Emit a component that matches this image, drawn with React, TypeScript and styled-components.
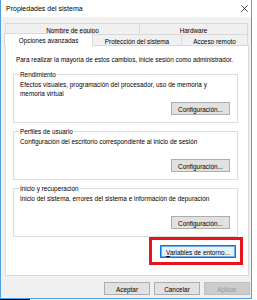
import React from "react";
import styled, { createGlobalStyle } from "styled-components";

const Global = createGlobalStyle`
  html, body { margin: 0; padding: 0; background: #ffffff; }
  body {
    width: 257px;
    height: 300px;
    overflow: hidden;
    font-family: "Liberation Sans", Arial, sans-serif;
    color: #000000;
  }
  * { box-sizing: border-box; }
`;

const Screen = styled.div`
  width: 257px;
  height: 300px;
  display: flex;
  flex-direction: column;
  background: #ffffff;
`;

const Window = styled.div`
  width: 252px;
  height: 299px;
  display: flex;
  flex-direction: column;
  border: 1px solid #4f9fe3;
  border-top: none;
  background: #f0f0f0;
`;

const TaskbarSliver = styled.div`
  width: 30px;
  height: 1px;
  background: #000000;
`;

const TitleBar = styled.div`
  height: 17px;
  flex: none;
  background: #ffffff;
  display: flex;
  align-items: center;
  justify-content: space-between;
  padding: 0 3px 0 5px;
`;

const Title = styled.span`
  font-size: 7px;
  line-height: 9px;
  white-space: nowrap;
`;

const CloseIcon = styled.svg`
  display: block;
  width: 7px;
  height: 7px;
`;

const Body = styled.div`
  flex: 1;
  display: flex;
  flex-direction: column;
  padding: 6px 2px 0 4px;
  font-size: 6.4px;
  line-height: 9px;
`;

const TabRow = styled.div<{ $first?: boolean }>`
  display: flex;
  align-items: flex-start;
  height: 11px;
  margin-top: ${(p) => (p.$first ? "0" : "0")};
`;

const Tab = styled.div<{ $w: number; $active?: boolean; $lead?: boolean }>`
  position: relative;
  flex: none;
  width: ${(p) => p.$w}px;
  height: ${(p) => (p.$active ? 13 : 11)}px;
  margin-left: ${(p) => (p.$lead && !p.$active ? 0 : -1)}px;
  margin-top: ${(p) => (p.$active ? -1 : 0)}px;
  z-index: ${(p) => (p.$active ? 2 : 1)};
  display: flex;
  align-items: center;
  justify-content: center;
  padding-top: ${(p) => (p.$active ? 1 : 2)}px;
  border: 1px solid #d9d9d9;
  border-bottom: none;
  background: ${(p) => (p.$active ? "#ffffff" : "#f0f0f0")};
  white-space: nowrap;
`;

const Panel = styled.div`
  flex: none;
  height: 231px;
  display: flex;
  flex-direction: column;
  border: 1px solid #d9d9d9;
  background: #ffffff;
  padding: 9px 10px 0 7px;
`;

const Intro = styled.div`
  margin-left: 3px;
  white-space: nowrap;
`;

const Groups = styled.div`
  display: flex;
  flex-direction: column;
  gap: 8px;
  margin-top: 10px;
`;

const Group = styled.div`
  display: flex;
  flex-direction: column;
  border: 1px solid #dcdcdc;
  padding: 0 7px 7px 6px;
`;

const GroupTitle = styled.span`
  display: block;
  width: fit-content;
  margin: -5px 0 1px -1px;
  padding: 0 1px;
  background: #ffffff;
  white-space: nowrap;
`;

const Desc = styled.div`
  min-height: 18px;
`;

const ButtonRow = styled.div`
  display: flex;
  justify-content: flex-end;
  margin-top: 4px;
`;

const Button = styled.div<{ $w: number; $disabled?: boolean; $focused?: boolean }>`
  flex: none;
  width: ${(p) => p.$w}px;
  height: 13px;
  display: flex;
  align-items: center;
  justify-content: center;
  padding-top: 1px;
  border: 1px solid
    ${(p) => (p.$focused ? "#0078d7" : p.$disabled ? "#bfbfbf" : "#adadad")};
  background: ${(p) => (p.$disabled ? "#cccccc" : p.$focused ? "#e5f1fb" : "#e1e1e1")};
  color: ${(p) => (p.$disabled ? "#9a9a9a" : "#000000")};
  box-shadow: ${(p) => (p.$focused ? "inset 0 0 0 1px #6fb0e6" : "none")};
  white-space: nowrap;
`;

const Mnemonic = styled.span`
  text-decoration: underline;
`;

const Highlight = styled.div`
  align-self: flex-end;
  margin-right: -5px;
  border: 3px solid #e8141c;
  padding: 5px 4px 4px 8px;
`;

const Footer = styled.div`
  display: flex;
  justify-content: flex-end;
  gap: 4px;
  margin: 6px -1px 0 0;
`;

const tabsTop = [
  { label: "Nombre de equipo", w: 135 },
  { label: "Hardware", w: 109 },
];

const tabsBottom = [
  { label: "Opciones avanzadas", w: 89, active: true },
  { label: "Protección del sistema", w: 90 },
  { label: "Acceso remoto", w: 67 },
];

const groups = [
  {
    title: "Rendimiento",
    desc: "Efectos visuales, programación del procesador, uso de memoria y memoria virtual",
  },
  {
    title: "Perfiles de usuario",
    desc: "Configuración del escritorio correspondiente al inicio de sesión",
  },
  {
    title: "Inicio y recuperación",
    desc: "Inicio del sistema, errores del sistema e información de depuración",
  },
];

export default function App() {
  return (
    <>
      <Global />
      <Screen>
        <Window>
          <TitleBar>
            <Title>Propiedades del sistema</Title>
            <CloseIcon viewBox="0 0 7 7">
              <path d="M0.3 0.3 L6.7 6.7 M6.7 0.3 L0.3 6.7" stroke="#1a1a1a" strokeWidth="0.8" fill="none" />
            </CloseIcon>
          </TitleBar>
          <Body>
            <TabRow $first>
              {tabsTop.map((t, i) => (
                <Tab key={t.label} $w={t.w} $lead={i === 0}>
                  {t.label}
                </Tab>
              ))}
            </TabRow>
            <TabRow>
              {tabsBottom.map((t, i) => (
                <Tab key={t.label} $w={t.w} $active={t.active} $lead={i === 0}>
                  {t.label}
                </Tab>
              ))}
            </TabRow>
            <Panel>
              <Intro>
                Para realizar la mayoría de estos cambios, inicie sesión como administrador.
              </Intro>
              <Groups>
                {groups.map((g) => (
                  <Group key={g.title}>
                    <GroupTitle>{g.title}</GroupTitle>
                    <Desc>{g.desc}</Desc>
                    <ButtonRow>
                      <Button $w={59}>Configuración...</Button>
                    </ButtonRow>
                  </Group>
                ))}
              </Groups>
              <Highlight>
                <Button $w={76} $focused>
                  <span>
                    <Mnemonic>V</Mnemonic>ariables de entorno...
                  </span>
                </Button>
              </Highlight>
            </Panel>
            <Footer>
              <Button $w={46}>Aceptar</Button>
              <Button $w={46}>Cancelar</Button>
              <Button $w={46} $disabled>
                Aplicar
              </Button>
            </Footer>
          </Body>
        </Window>
        <TaskbarSliver />
      </Screen>
    </>
  );
}
